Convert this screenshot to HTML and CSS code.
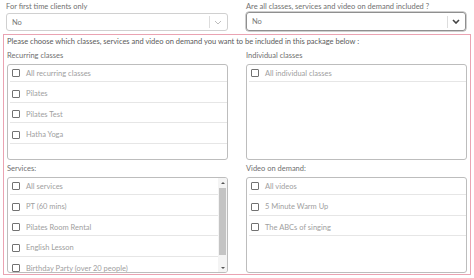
FILE: index.html
```html
<!DOCTYPE html>
<html lang="en">
<head>
  <meta charset="UTF-8">
  <meta name="viewport" content="width=device-width, initial-scale=1.0">
  <title>Package settings</title>
  <link rel="stylesheet" href="styles.css">
</head>
<body>
  <div class="page">
    <div class="top">
      <div class="field">
        <label class="label">For first time clients only</label>
        <div class="select">
          <span class="select-value">No</span>
          <span class="select-sep"></span>
          <svg class="chevron" width="8" height="5" viewBox="0 0 8 5"><path d="M1 1 L4 4 L7 1" fill="none" stroke="#bdbdbd" stroke-width="1"/></svg>
        </div>
      </div>
      <div class="field">
        <label class="label">Are all classes, services and video on demand included ?</label>
        <div class="select focused">
          <span class="select-value">No</span>
          <span class="select-sep"></span>
          <svg class="chevron" width="8" height="5" viewBox="0 0 8 5"><path d="M1 1 L4 4 L7 1" fill="none" stroke="#444" stroke-width="1.6"/></svg>
        </div>
      </div>
    </div>

    <div class="panel">
      <p class="intro">Please choose which classes, services and video on demand you want to be included in this package below :</p>
      <div class="grid">
        <div class="group">
          <div class="label">Recurring classes</div>
          <div class="list">
            <div class="items">
              <div class="item"><span class="box"></span>All recurring classes</div>
              <div class="item"><span class="box"></span>Pilates</div>
              <div class="item"><span class="box"></span>Pilates Test</div>
              <div class="item"><span class="box"></span>Hatha Yoga</div>
            </div>
          </div>
        </div>
        <div class="group">
          <div class="label">Individual classes</div>
          <div class="list">
            <div class="items">
              <div class="item"><span class="box"></span>All individual classes</div>
            </div>
          </div>
        </div>
        <div class="group">
          <div class="label">Services:</div>
          <div class="list">
            <div class="items">
              <div class="item"><span class="box"></span>All services</div>
              <div class="item"><span class="box"></span>PT (60 mins)</div>
              <div class="item"><span class="box"></span>Pilates Room Rental</div>
              <div class="item"><span class="box"></span>English Lesson</div>
              <div class="item"><span class="box"></span>Birthday Party (over 20 people)</div>
            </div>
            <div class="scrollbar">
              <span class="arrow up"></span>
              <span class="track"><span class="thumb"></span></span>
              <span class="arrow down"></span>
            </div>
          </div>
        </div>
        <div class="group">
          <div class="label">Video on demand:</div>
          <div class="list">
            <div class="items">
              <div class="item"><span class="box"></span>All videos</div>
              <div class="item"><span class="box"></span>5 Minute Warm Up</div>
              <div class="item"><span class="box"></span>The ABCs of singing</div>
            </div>
          </div>
        </div>
      </div>
    </div>
  </div>
</body>
</html>
```

FILE: styles.css
```css
body {
  margin: 0;
  font-family: Lato, "Open Sans", sans-serif;
  font-size: 7.5px;
  color: #666;
  background: #fff;
}
.page {
  padding: 0 3px;
}
.top {
  display: grid;
  grid-template-columns: 222px 220px;
  column-gap: 18px;
  padding: 2px 0 0 3px;
}
.label {
  display: block;
  line-height: 10px;
  color: #707070;
}
.select {
  display: flex;
  align-items: center;
  height: 18px;
  margin-top: 1px;
  border: 1px solid #d0d0d0;
  border-radius: 3px;
  box-sizing: border-box;
  padding: 0 5px 0 5px;
}
.select.focused {
  height: 19px;
  margin-top: 0;
  border-color: #8f8f8f;
  box-shadow: 0 0 0 0.5px #a0a0a0;
}
.select-value {
  flex: 1;
  color: #777;
}
.select-sep {
  width: 1px;
  height: 12px;
  background: #ddd;
  margin-right: 4px;
}
.chevron {
  display: block;
}
.panel {
  margin-top: 3px;
  border: 1px solid #eaa3b2;
  padding: 2px 3px 1px 3px;
}
.intro {
  margin: 0;
  line-height: 10px;
  color: #5a5a5a;
}
.grid {
  display: grid;
  grid-template-columns: 221px 221px;
  column-gap: 18px;
  row-gap: 4px;
  margin-top: 4px;
}
.group .label {
  margin-bottom: 3px;
}
.list {
  display: flex;
  height: 96px;
  box-sizing: border-box;
  border: 1px solid #bdbdbd;
  border-radius: 3px;
  overflow: hidden;
}
.items {
  flex: 1;
  overflow: hidden;
  padding-left: 2px;
}
.item {
  display: flex;
  align-items: center;
  height: 16px;
  border-bottom: 1px solid #e6e6e6;
  margin-bottom: 3.5px;
  padding-left: 2px;
  color: #a0a0a0;
}
.box {
  width: 6px;
  height: 6px;
  border: 1.5px solid #727272;
  border-radius: 1px;
  margin-right: 6px;
  flex: none;
}
.scrollbar {
  display: flex;
  flex-direction: column;
  width: 9px;
  background: #f4f4f4;
}
.arrow {
  height: 9px;
  display: flex;
  align-items: center;
  justify-content: center;
}
.arrow::before {
  content: "";
  border-left: 2px solid transparent;
  border-right: 2px solid transparent;
}
.arrow.up::before {
  border-bottom: 2.5px solid #555;
}
.arrow.down::before {
  border-top: 2.5px solid #555;
}
.track {
  flex: 1;
  padding: 1px 1px 8px 1px;
  display: flex;
}
.thumb {
  flex: 1;
  background: #c4c4c4;
}
```
